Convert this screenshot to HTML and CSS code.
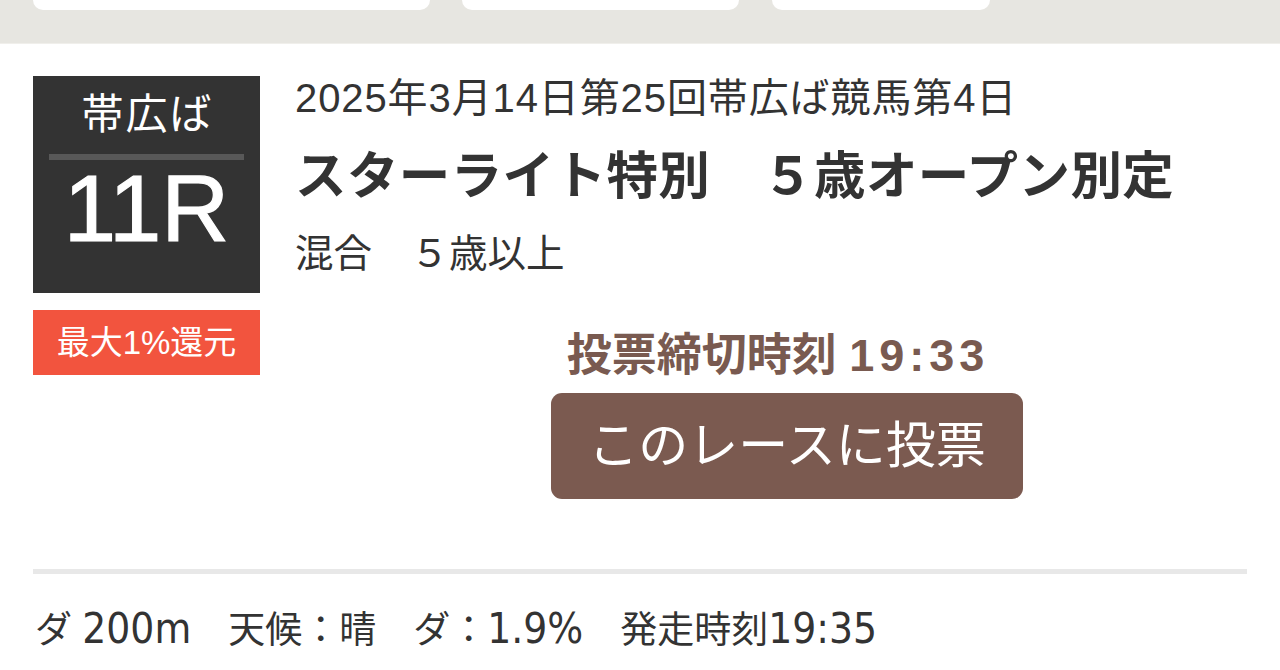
FILE: index.html
```html
<!DOCTYPE html>
<html lang="ja">
<head>
<meta charset="utf-8">
<title>帯広ば 11R</title>
<link rel="stylesheet" href="styles.css">
</head>
<body>
<div class="topbar">
  <div class="tab tab-a"></div>
  <div class="tab tab-b"></div>
  <div class="tab tab-c"></div>
</div>
<main class="race">
  <div class="race-row">
    <div class="left">
      <div class="venue">
        <div class="venue-name">帯広ば</div>
        <div class="venue-line"></div>
        <div class="venue-num">11R</div>
      </div>
      <div class="badge">最大1%還元</div>
    </div>
    <div class="right">
      <div class="date">2025年3月14日第25回帯広ば競馬第4日</div>
      <h1 class="title">スターライト特別　５歳オープン別定</h1>
      <div class="cond">混合　５歳以上</div>
      <div class="vote">
        <div class="deadline">投票締切時刻 <span class="dl-time">19:33</span></div>
        <div class="vote-btn">このレースに投票</div>
      </div>
    </div>
  </div>
  <div class="divider"></div>
  <div class="info">ダ <span class="num">200m</span>　天候：晴　ダ：<span class="num">1.9%</span>　発走時刻<span class="num">19:35</span></div>
</main>
</body>
</html>
```

FILE: styles.css
```css
html, body {
  margin: 0;
  padding: 0;
  background: #ffffff;
  font-family: "Liberation Sans", "Noto Sans CJK JP", sans-serif;
  color: #333333;
}
.topbar {
  height: 43px;
  background: #e7e6e1;
  display: flex;
  padding-left: 33px;
  border-bottom: 1px solid #f0efeb;
}
.tab {
  height: 10px;
  background: #ffffff;
  border-radius: 0 0 12px 12px;
}
.tab-a { width: 397px; }
.tab-b { width: 277px; margin-left: 32px; }
.tab-c { width: 218px; margin-left: 33px; }

.race {
  padding: 32px 33px 0 33px;
}
.race-row {
  display: flex;
}
.left {
  width: 227px;
  flex: none;
}
.venue {
  background: #333333;
  height: 217px;
  display: flex;
  flex-direction: column;
  align-items: center;
}
.venue-name {
  color: #ffffff;
  font-size: 42px;
  line-height: 48px;
  letter-spacing: 2px;
  margin-top: 15px;
  padding-left: 2px;
}
.venue-line {
  width: 195px;
  height: 6px;
  background: #585858;
  margin-top: 15px;
}
.venue-num {
  color: #ffffff;
  font-size: 94px;
  line-height: 96px;
  margin-top: 1px;
  -webkit-text-stroke: 1.2px #ffffff;
}
.badge {
  margin-top: 17px;
  height: 65px;
  background: #f2543e;
  color: #ffffff;
  font-size: 33px;
  line-height: 65px;
  text-align: center;
}
.right {
  margin-left: 35px;
  flex: 1;
}
.date {
  font-size: 40px;
  line-height: 44px;
  letter-spacing: 0.9px;
  margin-top: 0;
}
.title {
  margin: 28px 0 0 0;
  font-size: 51.5px;
  line-height: 56px;
  font-weight: 700;
  letter-spacing: 0.4px;
  white-space: nowrap;
}
.cond {
  margin-top: 28px;
  font-size: 38.5px;
  line-height: 44px;
}
.vote {
  margin-top: 57px;
  margin-left: 256px;
  width: 472px;
  text-align: center;
}
.deadline {
  color: #795a50;
  font-size: 45px;
  line-height: 46px;
  font-weight: 700;
  padding-right: 18px;
}
.dl-time {
  letter-spacing: 5px;
}
.vote-btn {
  margin-top: 14px;
  height: 106px;
  background: #7b5a50;
  border-radius: 11px;
  color: #ffffff;
  font-size: 50px;
  line-height: 106px;
}
.divider {
  margin-top: 70px;
  height: 5px;
  background: #e8e8e8;
}
.info {
  margin-top: 33px;
  font-size: 37px;
  line-height: 44px;
  padding-left: 2px;
  white-space: nowrap;
}
.num {
  font-family: "DejaVu Sans Condensed", "DejaVu Sans", sans-serif;
  font-size: 42px;
  letter-spacing: 0;
}
```
